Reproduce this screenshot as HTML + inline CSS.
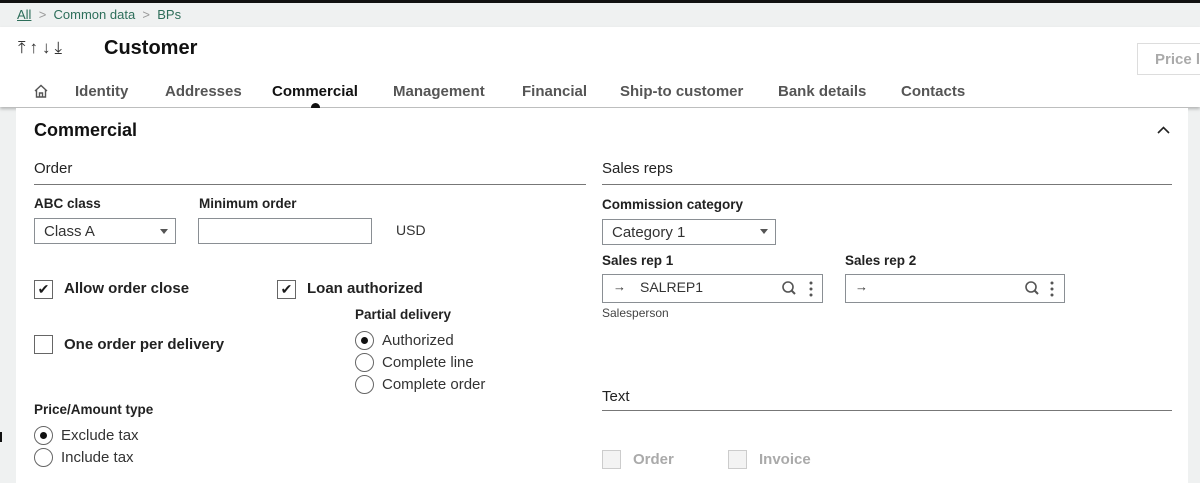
<!DOCTYPE html>
<html><head><meta charset="utf-8"><style>
*{box-sizing:border-box;margin:0;padding:0}
body{width:1200px;height:483px;overflow:hidden;background:#eff1f1;font-family:"Liberation Sans",sans-serif;position:relative;color:#1a1a1a}
.a{position:absolute;white-space:nowrap}
.tab{font-size:15px;font-weight:bold;color:#555;top:83px}
.lbl{font-size:13.5px;font-weight:bold;color:#222}
.inp{border:1px solid #8a8f94;background:#fff;height:26px}
.cb{width:19px;height:19px;border:1px solid #666;background:#fff}
.rd{width:19px;height:19px;border:1px solid #666;border-radius:50%;background:#fff}
.rd.on::after{content:"";position:absolute;left:5px;top:5px;width:7px;height:7px;border-radius:50%;background:#111}
.txt{font-size:15px;color:#333}
.sec{font-size:15px;color:#222}
.line{height:1px;background:#777}
</style></head><body>
<div class="a" style="left:0;top:0;width:1200px;height:3px;background:#111"></div>
<div class="a" style="left:0;top:3px;width:1200px;height:24px;background:#eff1f1"></div>
<div class="a" style="left:17px;top:7px;font-size:13px;color:#2d6e5a"><u>All</u> <span style="color:#999">&nbsp;&gt;&nbsp;</span> Common data <span style="color:#999">&nbsp;&gt;&nbsp;</span> BPs</div>
<div class="a" style="left:0;top:27px;width:1200px;height:80px;background:#fff;box-shadow:0 2px 3px rgba(0,0,0,.25)"></div>
<div class="a" style="left:18px;top:38px;font-size:17px;color:#333;letter-spacing:4px">⤒↑↓⤓</div>
<div class="a" style="left:104px;top:37px;font-size:20px;font-weight:bold;color:#111">Customer</div>
<div class="a" style="left:1137px;top:43px;width:70px;height:32px;border:1px solid #ddd;font-size:15px;font-weight:bold;color:#aaa;padding:7px 0 0 17px">Price l</div>
<svg class="a" style="left:33px;top:83px" width="16" height="16" viewBox="0 0 16 16"><path d="M2 8 L8 2.5 L14 8 M3.5 7 V14 H12.5 V7 M6.5 14 V10 H9.5 V14" fill="none" stroke="#555" stroke-width="1.4"/></svg>
<div class="a tab" style="left:75px">Identity</div>
<div class="a tab" style="left:165px">Addresses</div>
<div class="a tab" style="left:272px;color:#111">Commercial</div>
<div class="a" style="left:311px;top:103px;width:9px;height:9px;border-radius:50%;background:#111"></div>
<div class="a tab" style="left:393px">Management</div>
<div class="a tab" style="left:522px">Financial</div>
<div class="a tab" style="left:620px">Ship-to customer</div>
<div class="a tab" style="left:778px">Bank details</div>
<div class="a tab" style="left:901px">Contacts</div>
<div class="a" style="left:16px;top:108px;width:1172px;height:375px;background:#fff"></div>
<div class="a" style="left:34px;top:120px;font-size:18px;font-weight:bold;color:#111">Commercial</div>
<svg class="a" style="left:1157px;top:126px" width="13" height="9"><path d="M1 7 L6.5 1.5 L12 7" fill="none" stroke="#222" stroke-width="1.6"/></svg>
<div class="a sec" style="left:34px;top:160px">Order</div>
<div class="a line" style="left:34px;top:184px;width:552px"></div>
<div class="a sec" style="left:602px;top:160px">Sales reps</div>
<div class="a line" style="left:602px;top:184px;width:570px"></div>
<div class="a lbl" style="left:34px;top:196px">ABC class</div>
<div class="a inp" style="left:34px;top:218px;width:142px"></div>
<div class="a txt" style="left:44px;top:223px">Class A</div>
<div class="a" style="left:160px;top:229px;border:4px solid transparent;border-top:5px solid #555"></div>
<div class="a lbl" style="left:199px;top:196px">Minimum order</div>
<div class="a inp" style="left:198px;top:218px;width:174px"></div>
<div class="a txt" style="left:396px;top:222px;font-size:14px">USD</div>
<div class="a lbl" style="left:602px;top:197px">Commission category</div>
<div class="a inp" style="left:602px;top:219px;width:174px"></div>
<div class="a txt" style="left:612px;top:224px">Category 1</div>
<div class="a" style="left:760px;top:229px;border:4px solid transparent;border-top:5px solid #555"></div>
<div class="a lbl" style="left:602px;top:253px">Sales rep 1</div>
<div class="a inp" style="left:602px;top:274px;width:221px;height:29px"></div>
<div class="a txt" style="left:613px;top:279px;font-size:13px">→</div>
<div class="a txt" style="left:640px;top:279px;font-size:14px">SALREP1</div>
<div class="a lbl" style="left:845px;top:253px">Sales rep 2</div>
<div class="a inp" style="left:845px;top:274px;width:220px;height:29px"></div>
<div class="a txt" style="left:855px;top:279px;font-size:13px">→</div>
<svg class="a" style="left:781px;top:280px" width="34" height="18"><circle cx="7" cy="7" r="5" fill="none" stroke="#555" stroke-width="1.6"/><path d="M10.5 10.5 L14 14" stroke="#555" stroke-width="2"/><circle cx="30" cy="3" r="1.5" fill="#555"/><circle cx="30" cy="9" r="1.5" fill="#555"/><circle cx="30" cy="15" r="1.5" fill="#555"/></svg>
<svg class="a" style="left:1024px;top:280px" width="34" height="18"><circle cx="7" cy="7" r="5" fill="none" stroke="#555" stroke-width="1.6"/><path d="M10.5 10.5 L14 14" stroke="#555" stroke-width="2"/><circle cx="28" cy="3" r="1.5" fill="#555"/><circle cx="28" cy="9" r="1.5" fill="#555"/><circle cx="28" cy="15" r="1.5" fill="#555"/></svg>
<div class="a" style="left:602px;top:306px;font-size:12px;color:#444">Salesperson</div>
<div class="a cb" style="left:34px;top:280px;font-size:14px;line-height:17px;text-align:center">✔</div>
<div class="a lbl" style="left:64px;top:280px;font-size:15px">Allow order close</div>
<div class="a cb" style="left:277px;top:280px;font-size:14px;line-height:17px;text-align:center">✔</div>
<div class="a lbl" style="left:307px;top:280px;font-size:15px">Loan authorized</div>
<div class="a lbl" style="left:355px;top:307px">Partial delivery</div>
<div class="a cb" style="left:34px;top:335px"></div>
<div class="a lbl" style="left:64px;top:336px;font-size:15px">One order per delivery</div>
<div class="a rd on" style="left:355px;top:331px"></div>
<div class="a txt" style="left:382px;top:332px">Authorized</div>
<div class="a rd" style="left:355px;top:353px"></div>
<div class="a txt" style="left:382px;top:354px">Complete line</div>
<div class="a rd" style="left:355px;top:375px"></div>
<div class="a txt" style="left:382px;top:376px">Complete order</div>
<div class="a lbl" style="left:34px;top:402px">Price/Amount type</div>
<div class="a rd on" style="left:34px;top:426px"></div>
<div class="a txt" style="left:61px;top:427px">Exclude tax</div>
<div class="a rd" style="left:34px;top:448px"></div>
<div class="a txt" style="left:61px;top:449px">Include tax</div>
<div class="a sec" style="left:602px;top:388px">Text</div>
<div class="a line" style="left:602px;top:410px;width:570px"></div>
<div class="a" style="left:602px;top:450px;width:19px;height:19px;border:1px solid #ccc;background:#f3f3f3"></div>
<div class="a" style="left:633px;top:451px;font-size:15px;font-weight:bold;color:#aaa">Order</div>
<div class="a" style="left:728px;top:450px;width:19px;height:19px;border:1px solid #ccc;background:#f3f3f3"></div>
<div class="a" style="left:759px;top:451px;font-size:15px;font-weight:bold;color:#aaa">Invoice</div>
<div class="a" style="left:0;top:432px;width:2px;height:10px;background:#111"></div>
</body></html>
